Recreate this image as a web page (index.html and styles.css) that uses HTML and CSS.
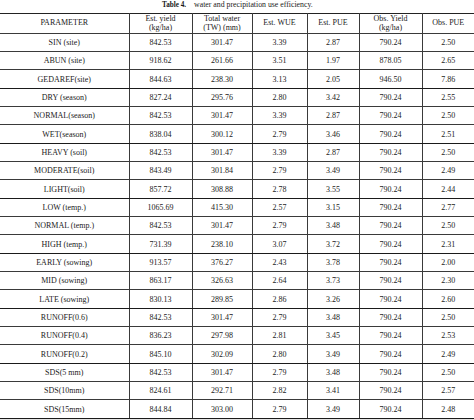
FILE: index.html
```html
<!DOCTYPE html>
<html>
<head>
<meta charset="utf-8">
<link rel="stylesheet" href="styles.css">
</head>
<body>
<div class="caption"><b>Table 4.</b><span class="tab"></span>water and precipitation use efficiency.</div>
<table class="data">
<colgroup>
<col class="c1"><col class="c2"><col class="c3"><col class="c4"><col class="c5"><col class="c6"><col class="c7">
</colgroup>
<thead>
<tr class="head"><th>PARAMETER</th><th>Est. yield<br>(kg/ha)</th><th>Total water<br>(TW) (mm)</th><th>Est. WUE</th><th>Est. PUE</th><th>Obs. Yield<br>(kg/ha)</th><th>Obs. PUE</th></tr>
</thead>
<tbody>
<tr><td>SIN (site)</td><td>842.53</td><td>301.47</td><td>3.39</td><td>2.87</td><td>790.24</td><td>2.50</td></tr>
<tr><td>ABUN (site)</td><td>918.62</td><td>261.66</td><td>3.51</td><td>1.97</td><td>878.05</td><td>2.65</td></tr>
<tr class="end"><td>GEDAREF(site)</td><td>844.63</td><td>238.30</td><td>3.13</td><td>2.05</td><td>946.50</td><td>7.86</td></tr>
<tr><td>DRY (season)</td><td>827.24</td><td>295.76</td><td>2.80</td><td>3.42</td><td>790.24</td><td>2.55</td></tr>
<tr><td>NORMAL(season)</td><td>842.53</td><td>301.47</td><td>3.39</td><td>2.87</td><td>790.24</td><td>2.50</td></tr>
<tr class="end"><td>WET(season)</td><td>838.04</td><td>300.12</td><td>2.79</td><td>3.46</td><td>790.24</td><td>2.51</td></tr>
<tr><td>HEAVY (soil)</td><td>842.53</td><td>301.47</td><td>3.39</td><td>2.87</td><td>790.24</td><td>2.50</td></tr>
<tr><td>MODERATE(soil)</td><td>843.49</td><td>301.84</td><td>2.79</td><td>3.49</td><td>790.24</td><td>2.49</td></tr>
<tr class="end"><td>LIGHT(soil)</td><td>857.72</td><td>308.88</td><td>2.78</td><td>3.55</td><td>790.24</td><td>2.44</td></tr>
<tr><td>LOW (temp.)</td><td>1065.69</td><td>415.30</td><td>2.57</td><td>3.15</td><td>790.24</td><td>2.77</td></tr>
<tr><td>NORMAL (temp.)</td><td>842.53</td><td>301.47</td><td>2.79</td><td>3.48</td><td>790.24</td><td>2.50</td></tr>
<tr class="end"><td>HIGH (temp.)</td><td>731.39</td><td>238.10</td><td>3.07</td><td>3.72</td><td>790.24</td><td>2.31</td></tr>
<tr><td>EARLY (sowing)</td><td>913.57</td><td>376.27</td><td>2.43</td><td>3.78</td><td>790.24</td><td>2.00</td></tr>
<tr><td>MID (sowing)</td><td>863.17</td><td>326.63</td><td>2.64</td><td>3.73</td><td>790.24</td><td>2.30</td></tr>
<tr class="end"><td>LATE (sowing)</td><td>830.13</td><td>289.85</td><td>2.86</td><td>3.26</td><td>790.24</td><td>2.60</td></tr>
<tr><td>RUNOFF(0.6)</td><td>842.53</td><td>301.47</td><td>2.79</td><td>3.48</td><td>790.24</td><td>2.50</td></tr>
<tr><td>RUNOFF(0.4)</td><td>836.23</td><td>297.98</td><td>2.81</td><td>3.45</td><td>790.24</td><td>2.53</td></tr>
<tr class="end"><td>RUNOFF(0.2)</td><td>845.10</td><td>302.09</td><td>2.80</td><td>3.49</td><td>790.24</td><td>2.49</td></tr>
<tr><td>SDS(5 mm)</td><td>842.53</td><td>301.47</td><td>2.79</td><td>3.48</td><td>790.24</td><td>2.50</td></tr>
<tr><td>SDS(10mm)</td><td>824.61</td><td>292.71</td><td>2.82</td><td>3.41</td><td>790.24</td><td>2.57</td></tr>
<tr class="end"><td>SDS(15mm)</td><td>844.84</td><td>303.00</td><td>2.79</td><td>3.49</td><td>790.24</td><td>2.48</td></tr>
</tbody>
</table>
<div class="foot"></div>
</body>
</html>
```
FILE: styles.css
```css
html, body {
  margin: 0;
  padding: 0;
  background: #ffffff;
}
body {
  width: 474px;
  height: 420px;
  overflow: hidden;
  font-family: "Liberation Serif", "Times New Roman", serif;
  color: #1a1a1a;
}
.caption {
  height: 13px;
  box-sizing: border-box;
  padding-left: 162px;
  font-size: 7.8px;
  line-height: 10px;
  text-align: left;
  white-space: nowrap;
}
.caption b {
  font-weight: bold;
  font-size: 7.2px;
}
.tab {
  display: inline-block;
  width: 8px;
}
.data {
  width: 474px;
  border-collapse: collapse;
  table-layout: fixed;
  font-size: 8px;
}
.c1 { width: 129px; }
.c2 { width: 63px; }
.c3 { width: 60px; }
.c4 { width: 55px; }
.c5 { width: 52px; }
.c6 { width: 63px; }
.c7 { width: 52px; }
.data th,
.data td {
  padding: 0;
  text-align: center;
  vertical-align: middle;
  border: 1px solid #3a3a3a;
  font-weight: normal;
  white-space: nowrap;
}
.data th:first-child,
.data td:first-child {
  border-left: none;
}
.data th:last-child,
.data td:last-child {
  border-right: none;
}
.head {
  height: 20px;
}
.head th {
  line-height: 8.6px;
  border-top: 1px solid #222;
}
.data tbody tr {
  height: 18px;
}
.data tbody tr:nth-child(3n) {
  height: 19px;
}
.data td {
  line-height: 9px;
}
.data tr.end td {
  border-bottom: 1.5px solid #1a1a1a;
}
.foot {
  height: 6px;
  background: #e4e4e4;
}
```
